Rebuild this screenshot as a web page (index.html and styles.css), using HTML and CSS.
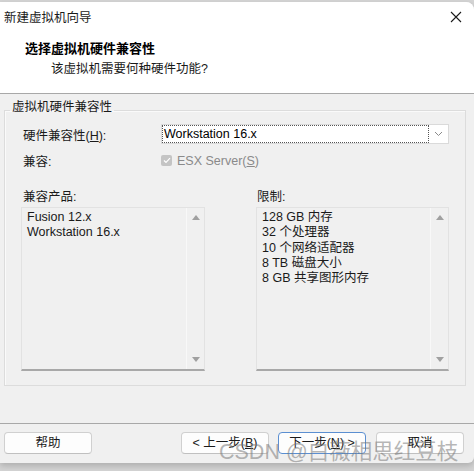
FILE: index.html
```html
<!DOCTYPE html>
<html lang="zh-CN">
<head>
<meta charset="utf-8">
<title>新建虚拟机向导</title>
<link rel="stylesheet" href="styles.css">
</head>
<body>
<div class="window">
  <header class="head">
    <div class="titlebar">
      <span class="title">新建虚拟机向导</span>
      <svg class="close" width="12" height="12" viewBox="0 0 12 12"><path d="M1 1 L11 11 M11 1 L1 11" stroke="#1a1a1a" stroke-width="1.1" fill="none"/></svg>
    </div>
    <div class="heading">选择虚拟机硬件兼容性</div>
    <div class="sub">该虚拟机需要何种硬件功能?</div>
  </header>
  <main class="content">
    <fieldset class="group">
      <legend>虚拟机硬件兼容性</legend>
      <div class="row row-hw">
        <span class="lbl">硬件兼容性(<u>H</u>):</span>
        <div class="select">
          <div class="select-text">Workstation 16.x</div>
          <svg class="chev" width="9" height="6" viewBox="0 0 9 6"><path d="M1 1 L4.5 4.5 L8 1" stroke="#8a8a8a" stroke-width="1" fill="none"/></svg>
        </div>
      </div>
      <div class="row row-cmp">
        <span class="lbl">兼容:</span>
        <div class="check">
          <span class="box"><svg width="8" height="7" viewBox="0 0 8 7"><path d="M1 3.5 L3 5.5 L7 1.2" stroke="#fff" stroke-width="1.2" fill="none"/></svg></span>
          <span class="check-text">ESX Server(<u>S</u>)</span>
        </div>
      </div>
      <div class="lists">
        <div class="col">
          <div class="col-lbl">兼容产品:</div>
          <div class="listbox">
            <ul class="items">
              <li>Fusion 12.x</li>
              <li>Workstation 16.x</li>
            </ul>
            <div class="scroll"><span class="up"></span><span class="down"></span></div>
          </div>
        </div>
        <div class="col">
          <div class="col-lbl">限制:</div>
          <div class="listbox">
            <ul class="items">
              <li>128 GB 内存</li>
              <li>32 个处理器</li>
              <li>10 个网络适配器</li>
              <li>8 TB 磁盘大小</li>
              <li>8 GB 共享图形内存</li>
            </ul>
            <div class="scroll"><span class="up"></span><span class="down"></span></div>
          </div>
        </div>
      </div>
    </fieldset>
  </main>
  <footer class="foot">
    <button class="btn">帮助</button>
    <div class="spacer"></div>
    <button class="btn">&lt; 上一步(<u>B</u>)</button>
    <button class="btn focus">下一步(<u>N</u>) &gt;</button>
    <button class="btn">取消</button>
  </footer>
  <div class="watermark">CSDN @白薇相思红豆枝</div>
</div>
</body>
</html>
```
FILE: styles.css
```css
* { box-sizing: border-box; }
html, body { margin: 0; padding: 0; }
body {
  width: 474px;
  height: 471px;
  overflow: hidden;
  background: #d4d4d4;
  font-family: "Liberation Sans", "Noto Sans CJK SC", sans-serif;
  font-size: 12px;
  color: #1a1a1a;
}
.window {
  position: relative;
  margin-top: 2px;
  width: 474px;
  height: 461px;
  background: #f0f0f0;
  border-radius: 0 8px 6px 0;
  display: flex;
  flex-direction: column;
  overflow: hidden;
  box-shadow: 0 3px 6px rgba(0,0,0,0.18);
}
.head {
  background: #fff;
  height: 92px;
  border-bottom: 1px solid #a8a8a8;
}
.titlebar {
  height: 28px;
  display: flex;
  align-items: center;
  justify-content: space-between;
  padding: 0 12px 0 4px;
}
.title { font-size: 12.5px; color: #1a1a1a; }
.close { display: block; margin-top: 1px; }
.heading {
  margin-top: 10px;
  padding-left: 25px;
  font-size: 13px;
  font-weight: bold;
  line-height: 18px;
  color: #000;
}
.sub {
  margin-top: 2px;
  padding-left: 51px;
  font-size: 12.5px;
  line-height: 18px;
  color: #1a1a1a;
}
.content {
  height: 329px;
  padding-top: 5px;
}
.group {
  margin: 0 0 0 4px;
  width: 462px;
  border: 1px solid #dcdcdc;
  box-shadow: inset 1px 1px 0 #fafafa;
  padding: 3px 16px 14px 16px;
  min-width: 0;
}
.group legend {
  margin-left: -11px;
  padding: 0 2px 6px 2px;
  font-size: 12.5px;
  line-height: 16px;
  color: #1a1a1a;
}
.row {
  display: grid;
  grid-template-columns: 140px 1fr;
  align-items: center;
}
.lbl { padding-left: 2px; font-size: 12.5px; }
.row-hw { height: 20px; }
.row-cmp { height: 18px; margin-top: 7px; }
.select {
  height: 20px;
  background: #fff;
  border: 1px solid #dadada;
  display: flex;
  align-items: center;
}
.select-text {
  flex: 1;
  height: 18px;
  border: 1px dotted #555;
  line-height: 16px;
  padding-left: 1px;
  font-size: 12.5px;
  color: #000;
}
.chev { margin: 0 5px; }
.check { display: flex; align-items: center; }
.box {
  width: 11px;
  height: 11px;
  border-radius: 2px;
  background: #c4c4c4;
  display: flex;
  align-items: center;
  justify-content: center;
  margin-right: 5px;
}
.box svg { display: block; }
.check-text { color: #8a8a8a; font-size: 12.5px; }
.lists {
  margin-top: 20px;
  display: grid;
  grid-template-columns: 184px 1fr;
  column-gap: 51px;
}
.col-lbl {
  padding-left: 2px;
  line-height: 16px;
  font-size: 12.5px;
  margin-bottom: 2px;
}
.col + .col .col-lbl { padding-left: 1px; }
.listbox {
  height: 164px;
  border: 1px solid #e2e2e2;
  border-bottom: 2px solid #a8a8a8;
  display: flex;
  background: #f0f0f0;
}
.items {
  flex: 1;
  list-style: none;
  margin: 0;
  padding: 2px 0 0 5px;
}
.items li {
  line-height: 15.3px;
  font-size: 12.5px;
  color: #1a1a1a;
}
.scroll {
  width: 18px;
  border-left: 1px solid #f8f8f8;
  display: flex;
  flex-direction: column;
  justify-content: space-between;
  align-items: center;
  padding: 7px 0;
}
.up, .down {
  width: 0;
  height: 0;
  border-left: 4px solid transparent;
  border-right: 4px solid transparent;
}
.up { border-bottom: 5px solid #a0a0a0; }
.down { border-top: 5px solid #a0a0a0; }
.foot {
  height: 40px;
  border-top: 1px solid #a8a8a8;
  display: flex;
  align-items: flex-start;
  padding: 8px 10px 0 4px;
  gap: 9px;
}
.spacer { flex: 1; }
.btn {
  width: 88px;
  height: 22px;
  background: #fdfdfd;
  border: 1px solid #d0d0d0;
  border-bottom-color: #c0c0c0;
  border-radius: 4px;
  font-family: "Liberation Sans", "Noto Sans CJK SC", sans-serif;
  font-size: 12.5px;
  color: #1a1a1a;
  padding: 0;
  line-height: 20px;
}
.btn.focus { border: 1px solid #5b8fd1; }
.btn:last-child { margin-left: 1px; }
.watermark {
  position: absolute;
  left: 219px;
  top: 437px;
  font-family: "Liberation Sans", "Noto Sans CJK SC", sans-serif;
  font-size: 21.5px;
  line-height: 26px;
  color: rgba(120,120,120,0.55);
  white-space: nowrap;
  pointer-events: none;
}
```
